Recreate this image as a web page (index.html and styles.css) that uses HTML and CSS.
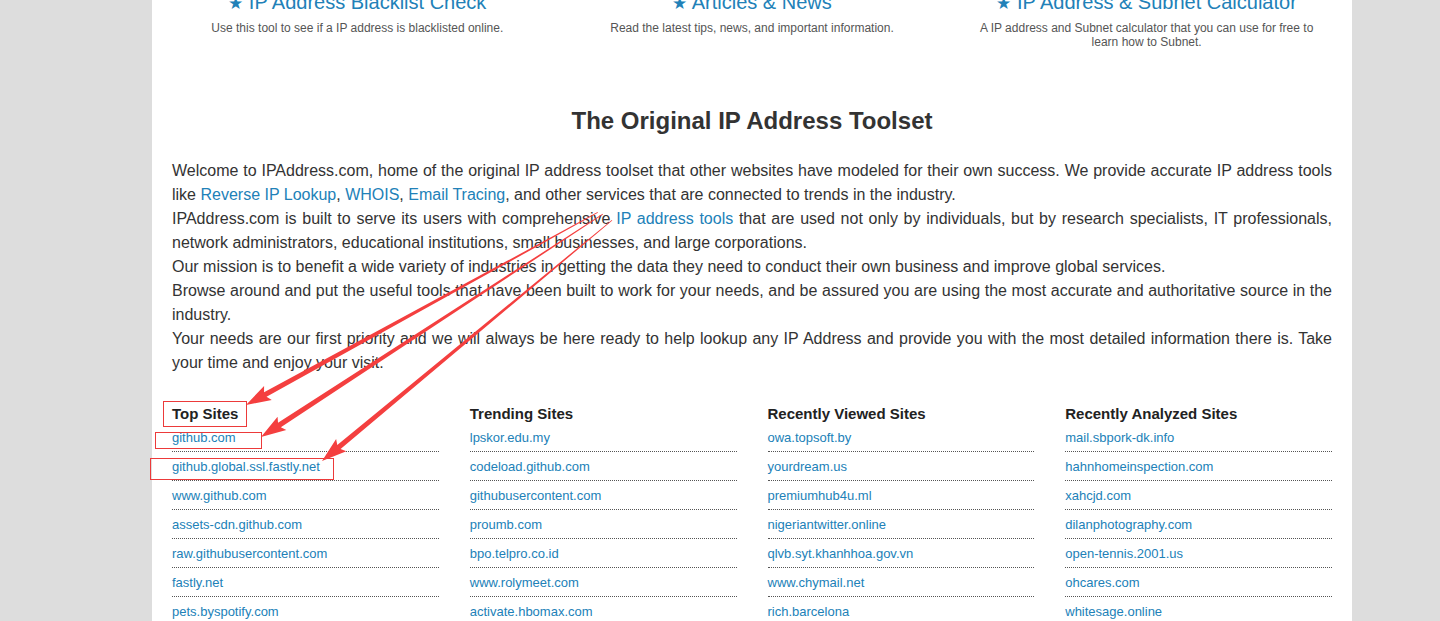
FILE: index.html
```html
<!DOCTYPE html>
<html>
<head>
    <title>IPAddress.com - The Original IP Address Toolset</title>
    <meta charset="utf-8">
    <link rel="stylesheet" href="styles.css">
</head>
<body>
    <div class="page">
        <div class="features">
            <div class="feature">
                <h3><a href="#"><span class="star">★</span> IP Address Blacklist Check</a></h3>
                <p>Use this tool to see if a IP address is blacklisted online.</p>
            </div>
            <div class="feature">
                <h3><a href="#"><span class="star">★</span> Articles &amp; News</a></h3>
                <p>Read the latest tips, news, and important information.</p>
            </div>
            <div class="feature">
                <h3><a href="#"><span class="star">★</span> IP Address &amp; Subnet Calculator</a></h3>
                <p>A IP address and Subnet calculator that you can use for free to learn how to Subnet.</p>
            </div>
        </div>

        <h2 class="title">The Original IP Address Toolset</h2>
        <p class="intro">
            Welcome to IPAddress.com, home of the original IP address toolset that other websites have modeled for their own success. We provide accurate IP address tools like <a href="#">Reverse IP Lookup</a>, <a href="#">WHOIS</a>, <a href="#">Email Tracing</a>, and other services that are connected to trends in the industry.<br>
            IPAddress.com is built to serve its users with comprehensive <a href="#">IP address tools</a> that are used not only by individuals, but by research specialists, IT professionals, network administrators, educational institutions, small businesses, and large corporations.<br>
            Our mission is to benefit a wide variety of industries in getting the data they need to conduct their own business and improve global services.<br>
            Browse around and put the useful tools that have been built to work for your needs, and be assured you are using the most accurate and authoritative source in the industry.<br>
            Your needs are our first priority and we will always be here ready to help lookup any IP Address and provide you with the most detailed information there is. Take your time and enjoy your visit.
        </p>

        <div class="sites">
            <div class="site-col">
                <h4>Top Sites</h4>
                <ul>
                    <li><a href="#">github.com</a></li>
                    <li><a href="#">github.global.ssl.fastly.net</a></li>
                    <li><a href="#">www.github.com</a></li>
                    <li><a href="#">assets-cdn.github.com</a></li>
                    <li><a href="#">raw.githubusercontent.com</a></li>
                    <li><a href="#">fastly.net</a></li>
                    <li><a href="#">pets.byspotify.com</a></li>
                </ul>
            </div>
            <div class="site-col">
                <h4>Trending Sites</h4>
                <ul>
                    <li><a href="#">lpskor.edu.my</a></li>
                    <li><a href="#">codeload.github.com</a></li>
                    <li><a href="#">githubusercontent.com</a></li>
                    <li><a href="#">proumb.com</a></li>
                    <li><a href="#">bpo.telpro.co.id</a></li>
                    <li><a href="#">www.rolymeet.com</a></li>
                    <li><a href="#">activate.hbomax.com</a></li>
                </ul>
            </div>
            <div class="site-col">
                <h4>Recently Viewed Sites</h4>
                <ul>
                    <li><a href="#">owa.topsoft.by</a></li>
                    <li><a href="#">yourdream.us</a></li>
                    <li><a href="#">premiumhub4u.ml</a></li>
                    <li><a href="#">nigeriantwitter.online</a></li>
                    <li><a href="#">qlvb.syt.khanhhoa.gov.vn</a></li>
                    <li><a href="#">www.chymail.net</a></li>
                    <li><a href="#">rich.barcelona</a></li>
                </ul>
            </div>
            <div class="site-col">
                <h4>Recently Analyzed Sites</h4>
                <ul>
                    <li><a href="#">mail.sbpork-dk.info</a></li>
                    <li><a href="#">hahnhomeinspection.com</a></li>
                    <li><a href="#">xahcjd.com</a></li>
                    <li><a href="#">dilanphotography.com</a></li>
                    <li><a href="#">open-tennis.2001.us</a></li>
                    <li><a href="#">ohcares.com</a></li>
                    <li><a href="#">whitesage.online</a></li>
                </ul>
            </div>
        </div>
    </div>

    <!-- screenshot annotations -->
    <svg class="marks" width="1440" height="621" viewBox="0 0 1440 621">
        <g fill="none" stroke="#ec3a3a" stroke-width="1">
            <rect x="163.5" y="401.5" width="83" height="25"/>
            <rect x="155.5" y="432.5" width="106" height="16"/>
            <rect x="150.5" y="458.5" width="183" height="21"/>
        </g>
        <g fill="#f43f3f">
            <polygon transform="translate(246 405) rotate(151.3)" points="-401,-0.4 -22,-2.6 -25,-8 0,0 -25,8 -22,2.6 -401,0.4"/>
            <polygon transform="translate(261 437) rotate(146.9)" points="-408,-0.4 -22,-2.6 -25,-8 0,0 -25,8 -22,2.6 -408,0.4"/>
            <polygon transform="translate(322 461) rotate(140.3)" points="-377,-0.4 -22,-2.6 -25,-8 0,0 -25,8 -22,2.6 -377,0.4"/>
        </g>
    </svg>
</body>
</html>
```

FILE: styles.css
```css
body {
    margin: 0;
    background: #ddd;
    font-family: 'Liberation Sans', Arial, sans-serif;
    color: #333;
    position: relative;
    overflow: hidden;
    height: 621px;
}
a {
    color: #2181b8;
    text-decoration: none;
}
.page {
    width: 1160px;
    margin-left: 152px;
    padding: 0 20px 40px;
    background: #fff;
}
.features {
    display: grid;
    grid-template-columns: repeat(3, 1fr);
    margin: -9px -12px 0;
    text-align: center;
}
.feature {
    padding: 0 25px;
}
.feature h3 {
    margin: 0 0 6px;
    font-size: 20px;
    line-height: 22px;
    font-weight: normal;
}
.feature .star {
    font-size: 17px;
}
.feature p {
    margin: 0;
    font-size: 12px;
    line-height: 14px;
    color: #555;
}
.title {
    margin: 59px 0 25px;
    text-align: center;
    font-size: 24px;
    line-height: 26px;
    color: #333;
}
.intro {
    margin: 0;
    font-size: 16px;
    line-height: 24px;
    text-align: justify;
}
.sites {
    display: grid;
    grid-template-columns: repeat(4, 1fr);
    gap: 31px;
    margin-top: 30px;
}
.site-col h4 {
    margin: 0;
    font-size: 15px;
    line-height: 18px;
    color: #222;
}
.site-col ul {
    list-style: none;
    margin: 0;
    padding: 0;
}
.site-col li {
    padding: 6px 0 4px;
    font-size: 13px;
    line-height: 18px;
    border-bottom: 1px dotted #555;
}
.marks {
    position: absolute;
    top: 0;
    left: 0;
    pointer-events: none;
}
```
